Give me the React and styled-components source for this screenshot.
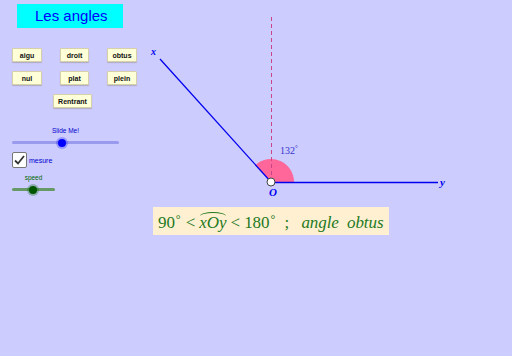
import styled, { createGlobalStyle } from 'styled-components';

const GlobalStyle = createGlobalStyle`
  html, body {
    margin: 0;
    padding: 0;
    background: #ccccff;
  }
`

const Canvas = styled.div`
  width: 512px;
  height: 356px;
  background: #ccccff;
  display: flex;
  font-family: "Liberation Sans", Arial, sans-serif;
  overflow: hidden;
`

const Panel = styled.div`
  width: 150px;
  box-sizing: border-box;
  padding: 4px 0 0 12px;
  display: flex;
  flex-direction: column;
`

const Title = styled.div`
  margin-left: 5px;
  width: 106px;
  height: 24px;
  background: #00ffff;
  color: #0000ff;
  font-size: 15px;
  line-height: 24px;
  padding-left: 18px;
  box-sizing: border-box;
`

const ButtonGrid = styled.div`
  margin-top: 20px;
  display: grid;
  grid-template-columns: 30px 29px 30px;
  grid-auto-rows: 14px;
  column-gap: 18px;
  row-gap: 9px;
`

const Btn = styled.div`
  width: ${p => p.$w || '100%'};
  margin-left: ${p => p.$offset || 0};
  grid-column: ${p => p.$span ? '1 / -1' : 'auto'};
  height: 14px;
  box-sizing: border-box;
  background: #ffffd8;
  border: 1px solid #d8d0a8;
  border-radius: 1px;
  box-shadow: 0 1px 1px rgba(120, 110, 80, 0.35);
  font-size: 7px;
  font-weight: bold;
  color: #111;
  display: flex;
  align-items: center;
  justify-content: center;
`

const SliderBlock = styled.div`
  margin-top: ${p => p.$top};
  width: ${p => p.$w};
  display: flex;
  flex-direction: column;
  align-items: center;
`

const SliderLabel = styled.div`
  font-size: 6.5px;
  line-height: 8px;
  color: ${p => p.$color};
`

const Track = styled.div`
  position: relative;
  margin-top: ${p => p.$gap};
  width: 100%;
  height: 3px;
  border-radius: 2px;
  background: ${p => p.$color};
`

const Knob = styled.div`
  position: absolute;
  top: 50%;
  left: ${p => p.$at};
  width: 8px;
  height: 8px;
  margin: -4px 0 0 -4px;
  border-radius: 50%;
  background: ${p => p.$color};
  box-shadow: 0 0 0 2px ${p => p.$halo};
`

const CheckRow = styled.div`
  margin-top: 8px;
  display: flex;
  align-items: center;
  gap: 2px;
`

const CheckBox = styled.div`
  width: 15px;
  height: 16px;
  box-sizing: border-box;
  background: #fff;
  border: 1px solid #777;
  border-radius: 2px;
  display: flex;
  align-items: center;
  justify-content: center;
`

const CheckLabel = styled.span`
  font-size: 7px;
  color: #0000cc;
`

const FigureColumn = styled.div`
  display: flex;
  flex-direction: column;
`

const Formula = styled.div`
  margin: 2px 0 0 3px;
  width: 236px;
  height: 28px;
  box-sizing: border-box;
  background: #fff0d2;
  color: #1e7a1e;
  font-family: "Liberation Serif", "Times New Roman", serif;
  font-size: 17px;
  display: flex;
  align-items: center;
  padding: 2px 0 0 5px;
`

const FormulaText = styled.span`
  white-space: pre;
  letter-spacing: -0.1px;
`

const Italic = styled.span`
  font-style: italic;
`

const Hat = styled.span`
  position: relative;
  font-style: italic;
  &::before {
    content: "";
    position: absolute;
    left: 1px;
    right: 0px;
    top: -1px;
    height: 7px;
    border-top: 1.2px solid #1e7a1e;
    border-radius: 50% 50% 0 0;
  }
`

const Deg = styled.span`
  font-size: 12px;
  vertical-align: 5px;
  margin: 0 1px;
`

const Figure = () => (
  <svg width="310" height="205" viewBox="150 0 310 205">
    <path d="M271 182 L294 182 A23 23 0 0 0 255.6 164.9 Z" fill="#ff6699" />
    <line x1="271.5" y1="17" x2="271.5" y2="182" stroke="#cc4488" strokeWidth="1" strokeDasharray="4,3" />
    <line x1="271" y1="182" x2="160" y2="59" stroke="#0000ee" strokeWidth="1.3" />
    <line x1="271" y1="182.5" x2="438" y2="182.5" stroke="#0000ee" strokeWidth="1.3" />
    <circle cx="271" cy="182" r="4" fill="#fff" stroke="#444" strokeWidth="1" />
    <text x="151" y="55" fontFamily="Liberation Serif, serif" fontStyle="italic" fontWeight="bold" fontSize="10" fill="#0000ee">x</text>
    <text x="440" y="186" fontFamily="Liberation Serif, serif" fontStyle="italic" fontWeight="bold" fontSize="11" fill="#0000ee">y</text>
    <text x="269" y="196" fontFamily="Liberation Serif, serif" fontStyle="italic" fontWeight="bold" fontSize="11" fill="#0000ee">O</text>
    <text x="280" y="154" fontFamily="Liberation Serif, serif" fontSize="10" fill="#3333cc">132<tspan fontSize="7" dy="-4">°</tspan></text>
  </svg>
)

const App = () => {
  return (
    <>
      <GlobalStyle />
      <Canvas>
        <Panel>
          <Title>Les angles</Title>
          <ButtonGrid>
            <Btn>aigu</Btn>
            <Btn>droit</Btn>
            <Btn>obtus</Btn>
            <Btn>nul</Btn>
            <Btn>plat</Btn>
            <Btn>plein</Btn>
            <Btn $span $w="39px" $offset="41px">Rentrant</Btn>
          </ButtonGrid>
          <SliderBlock $top="19px" $w="107px">
            <SliderLabel $color="#0000cc">Slide Me!</SliderLabel>
            <Track $gap="6px" $color="#9999ee">
              <Knob $at="47%" $color="#0000ff" $halo="rgba(0,0,255,0.25)" />
            </Track>
          </SliderBlock>
          <CheckRow>
            <CheckBox>
              <svg width="11" height="10" viewBox="0 0 11 10">
                <path d="M1 5.5 L4 8.5 L10 1" fill="none" stroke="#333" strokeWidth="1.8" />
              </svg>
            </CheckBox>
            <CheckLabel>mesure</CheckLabel>
          </CheckRow>
          <SliderBlock $top="6px" $w="43px">
            <SliderLabel $color="#006600">speed</SliderLabel>
            <Track $gap="6px" $color="#669966">
              <Knob $at="48%" $color="#005500" $halo="rgba(0,100,0,0.3)" />
            </Track>
          </SliderBlock>
        </Panel>
        <FigureColumn>
          <Figure />
          <Formula>
            <FormulaText>
              90<Deg>°</Deg>{' < '}<Hat>xOy</Hat>{' < '}180<Deg>°</Deg>{'  ;   '}<Italic>angle</Italic>{'  '}<Italic>obtus</Italic>
            </FormulaText>
          </Formula>
        </FigureColumn>
      </Canvas>
    </>
  )
}

export default App;
